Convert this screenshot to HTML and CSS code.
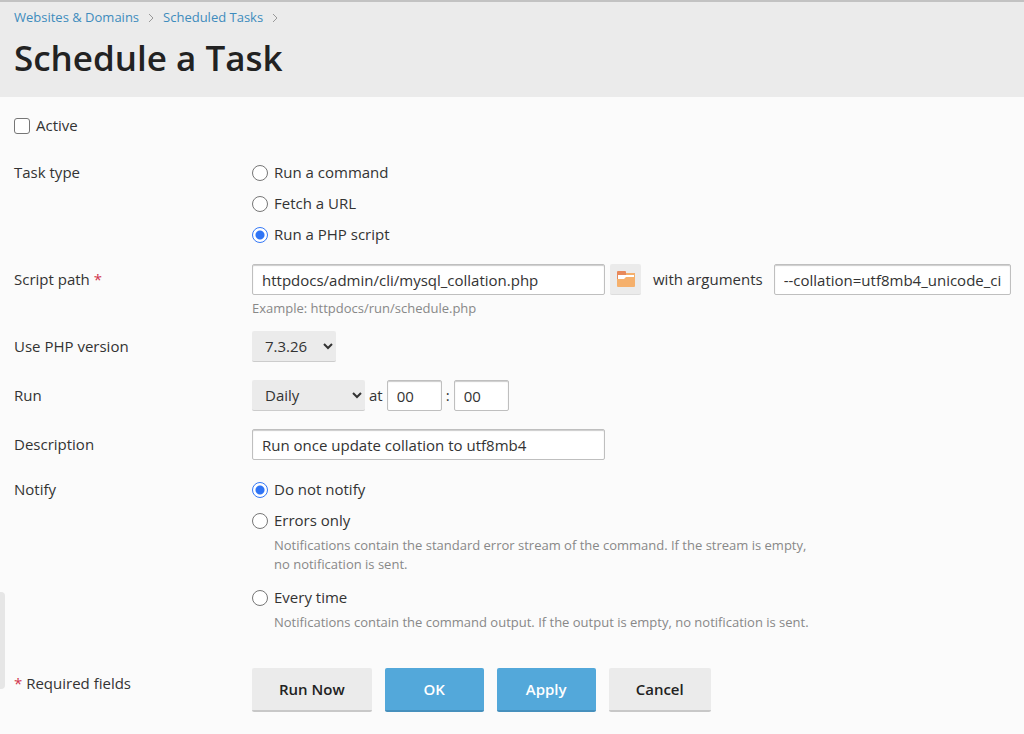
FILE: index.html
```html
<!DOCTYPE html>
<html lang="en">
<head>
  <meta charset="utf-8">
  <title>Schedule a Task</title>
  <link rel="stylesheet" href="styles.css">
</head>
<body>
  <header class="page-header">
    <nav class="pathbar" aria-label="Breadcrumb">
      <a href="#">Websites &amp; Domains</a>
      <svg class="pathbar-arrow" width="6" height="10" viewBox="0 0 6 10"><path d="M1 1l4 4-4 4"/></svg>
      <a href="#">Scheduled Tasks</a>
      <svg class="pathbar-arrow" width="6" height="10" viewBox="0 0 6 10"><path d="M1 1l4 4-4 4"/></svg>
    </nav>
    <h1>Schedule a Task</h1>
  </header>

  <form class="task-form">
    <label class="option active-option">
      <input type="checkbox" name="active">
      <span>Active</span>
    </label>

    <!-- Task type -->
    <div class="form-row" role="radiogroup" aria-labelledby="typeLabel">
      <span class="row-label" id="typeLabel">Task type</span>
      <div class="options">
        <label class="option"><input type="radio" name="type"><span>Run a command</span></label>
        <label class="option"><input type="radio" name="type"><span>Fetch a URL</span></label>
        <label class="option"><input type="radio" name="type" checked><span>Run a PHP script</span></label>
      </div>
    </div>

    <!-- Script -->
    <div class="form-row script-row">
      <label class="row-label control-label" for="scriptPath">Script path <span class="required">*</span></label>
      <div>
        <div class="controls">
          <input class="text-input long" type="text" id="scriptPath" value="httpdocs/admin/cli/mysql_collation.php">
          <button class="browse-button" type="button" aria-label="Browse">
            <svg width="18" height="16" viewBox="0 0 18 16">
              <path fill="#e8895a" d="M0 1a1 1 0 0 1 1-1h7a1 1 0 0 1 1 1v1h8a1 1 0 0 1 1 1v6H0z"/>
              <path fill="#f5b06c" d="M9 2h8a1 1 0 0 1 1 1v4H9z"/>
              <path fill="#fff" d="M1 4h16v5H1z"/>
              <path fill="#f5b06c" d="M0 8h7l2-2h9v9a1 1 0 0 1-1 1H1a1 1 0 0 1-1-1z"/>
            </svg>
          </button>
          <label class="arguments-label" for="arguments">with arguments</label>
          <input class="text-input arguments" type="text" id="arguments" value="--collation=utf8mb4_unicode_ci">
        </div>
        <div class="hint">Example: httpdocs/run/schedule.php</div>
      </div>
    </div>

    <div class="form-row">
      <label class="row-label control-label" for="phpVersion">Use PHP version</label>
      <div class="controls">
        <select class="select version" id="phpVersion">
          <option>7.3.26</option>
        </select>
      </div>
    </div>

    <!-- Schedule -->
    <div class="form-row">
      <label class="row-label control-label" for="period">Run</label>
      <div class="controls time-controls">
        <select class="select period" id="period">
          <option>Daily</option>
        </select>
        <label for="hour">at</label>
        <input class="text-input time" type="text" id="hour" value="00">
        <label for="minute">:</label>
        <input class="text-input time" type="text" id="minute" value="00">
      </div>
    </div>

    <div class="form-row">
      <label class="row-label control-label" for="description">Description</label>
      <div class="controls">
        <input class="text-input long" type="text" id="description" value="Run once update collation to utf8mb4">
      </div>
    </div>

    <!-- Notifications -->
    <div class="form-row" role="radiogroup" aria-labelledby="notifyLabel">
      <span class="row-label" id="notifyLabel">Notify</span>
      <div class="options">
        <label class="option"><input type="radio" name="notify" checked><span>Do not notify</span></label>
        <div>
          <label class="option"><input type="radio" name="notify"><span>Errors only</span></label>
          <div class="hint option-hint">Notifications contain the standard error stream of the command. If the stream is empty, no notification is sent.</div>
        </div>
        <div>
          <label class="option"><input type="radio" name="notify"><span>Every time</span></label>
          <div class="hint option-hint">Notifications contain the command output. If the output is empty, no notification is sent.</div>
        </div>
      </div>
    </div>

    <div class="form-row buttons-row">
      <span class="row-label control-label"><span class="required">*</span> Required fields</span>
      <div class="buttons">
        <button class="button" type="button">Run Now</button>
        <button class="button primary" type="submit">OK</button>
        <button class="button primary" type="button">Apply</button>
        <button class="button" type="button">Cancel</button>
      </div>
    </div>
  </form>

  <div class="side-handle"></div>
</body>
</html>
```
FILE: styles.css
```css
* {
  box-sizing: border-box;
}

body {
  margin: 0;
  font-family: 'Open Sans', 'Liberation Sans', sans-serif;
  font-size: 15px;
  line-height: 23px;
  color: #333;
  background: #fbfbfb;
}

input,
select,
button {
  margin: 0;
  font: inherit;
  color: inherit;
}

.page-header {
  padding: 4px 14px 14px;
  background: #ebebeb;
  border-top: 2px solid #c2c2c2;
}

.pathbar {
  display: flex;
  align-items: center;
  gap: 9px;
  font-size: 13px;
}

.pathbar a {
  color: #3e8cbd;
  text-decoration: none;
}

.pathbar-arrow {
  fill: none;
  stroke: #999;
}

h1 {
  margin: 4px 0 0;
  font-size: 35px;
  line-height: 50px;
  font-weight: 600;
  color: #222;
}

.task-form {
  padding: 17px 13px 22px 14px;
}

/* Rows */
.form-row {
  display: grid;
  grid-template-columns: 238px minmax(0, 1fr);
  margin-bottom: 18px;
}

.control-label {
  line-height: 30px;
}

.script-row {
  margin-bottom: 13px;
}

.buttons-row {
  margin: 32px 0 0;
}

.required {
  color: #d0334b;
}

.controls {
  display: flex;
  align-items: center;
  gap: 5px;
}

.time-controls {
  gap: 4px;
}

.hint {
  margin-top: 4px;
  font-size: 13px;
  line-height: 19px;
  color: #888;
}

/* Checkbox and radios */
.options {
  display: flex;
  flex-direction: column;
  gap: 8px;
}

.option {
  display: flex;
  align-items: center;
  gap: 6px;
}

.active-option {
  margin-bottom: 24px;
}

.option input {
  appearance: none;
  width: 16px;
  height: 16px;
  border: 1px solid #767676;
  border-radius: 50%;
  background: #fff;
}

.option input[type="checkbox"] {
  border-radius: 3px;
}

.option input:checked {
  border-color: #3478f6;
  background: radial-gradient(circle, #2f74f5 4px, #fff 5px);
}

.option-hint {
  max-width: 572px;
  margin-bottom: 4px;
  padding-left: 22px;
}

/* Fields */
.text-input {
  height: 31px;
  padding: 0 9px;
  border: 1px solid #bfbfbf;
  border-radius: 2px;
  background: #fff;
  box-shadow: inset 0 1px 1px #ccc;
}

.long {
  width: 353px;
}

.time {
  width: 55px;
}

.arguments {
  flex: 1;
  min-width: 0;
}

.arguments-label {
  margin: 0 6px 0 7px;
}

.select {
  height: 31px;
  padding: 0 0 0 9px;
  border: 0;
  border-bottom: 1px solid #ccc;
  border-radius: 2px;
  background-color: #ebebeb;
}

.version {
  width: 84px;
}

.period {
  width: 113px;
}

.browse-button {
  display: flex;
  align-items: center;
  justify-content: center;
  width: 31px;
  height: 31px;
  padding: 0;
  border: 0;
  border-bottom: 1px solid #ddd;
  border-radius: 2px;
  background: #ebebeb;
}

/* Buttons */
.buttons {
  display: flex;
  gap: 13px;
}

.button {
  min-width: 99px;
  height: 44px;
  padding: 0 27px;
  border: 0;
  border-bottom: 2px solid #c8c8c8;
  border-radius: 2px;
  font-weight: 600;
  color: #222;
  background: #ebebeb;
}

.button.primary {
  color: #fff;
  background: #53a8da;
  border-bottom-color: #4690bd;
}

/* Collapsed side panel handle */
.side-handle {
  position: absolute;
  left: 0;
  bottom: 45px;
  width: 5px;
  height: 97px;
  border-radius: 0 4px 4px 0;
  background: #e6e6e6;
}
```
